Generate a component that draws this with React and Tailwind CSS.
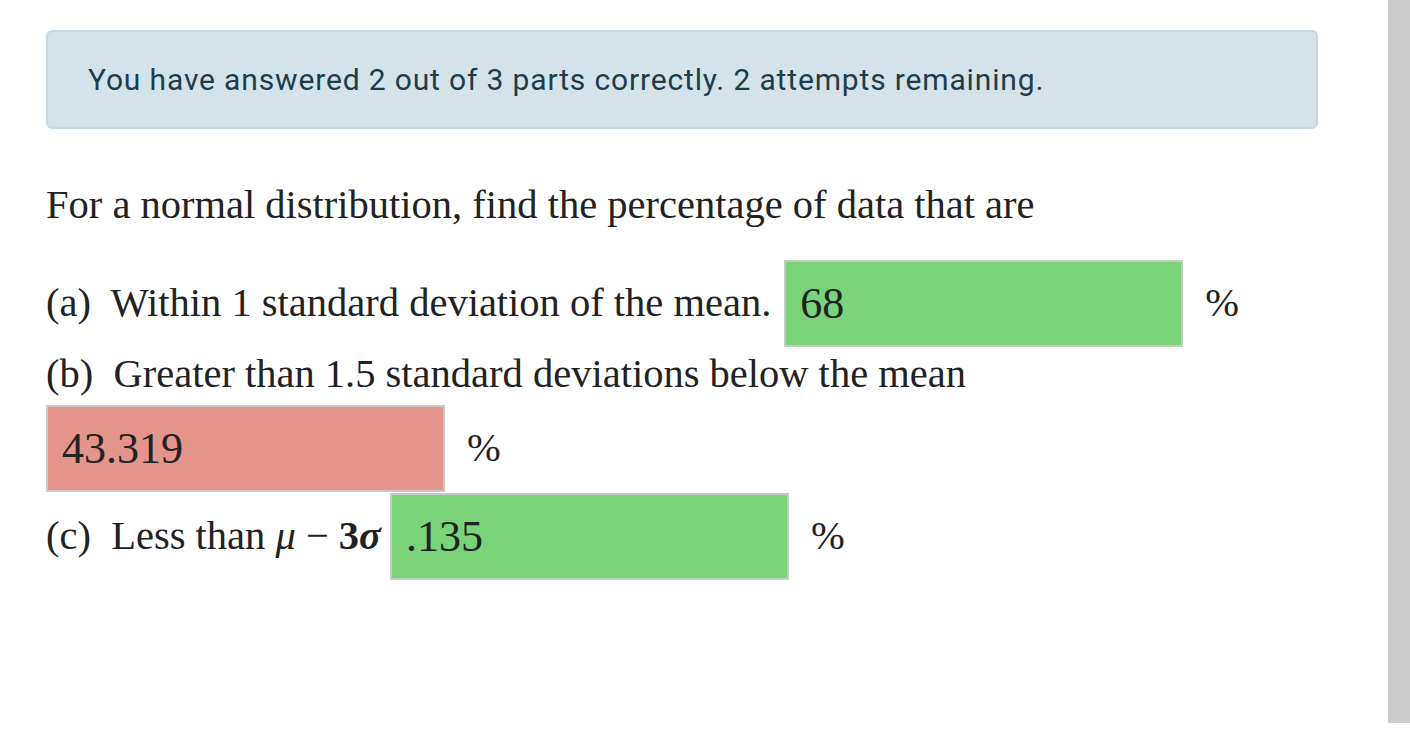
import React from "react";

const serif = { fontFamily: '"Liberation Serif", "Times New Roman", serif' };

const AnswerBox = ({ value, status }) => {
  const bg = status === "correct" ? "bg-[#79d479]" : "bg-[#e5948b]";
  return (
    <div
      className={`${bg} w-[399px] h-[87px] border-2 border-[#c9c9c9] flex items-center pl-[14px] text-[44px] text-[#222]`}
    >
      {value}
    </div>
  );
};

const Percent = ({ className }) => (
  <span className={`text-[40.5px] text-[#222] ${className}`}>%</span>
);

const App = () => {
  return (
    <div className="flex w-[1410px] h-[734px] bg-white overflow-hidden">
      <main className="flex-1 pl-[46px] pt-[30px]" style={serif}>
        <div className="w-[1272px] h-[99px] bg-[#d4e3e9] border-2 border-[#c6d9e0] rounded-[6px] flex items-center pl-[40px]">
          <p
            className="text-[30px] tracking-[0.85px] text-[#1e3d4b]"
            style={{ fontFamily: 'Roboto, "Liberation Sans", sans-serif' }}
          >
            You have answered 2 out of 3 parts correctly. 2 attempts remaining.
          </p>
        </div>

        <p className="mt-[49px] text-[40.5px] leading-[54px] text-[#222]">
          For a normal distribution, find the percentage of data that are
        </p>

        <div className="mt-[28px] flex items-center text-[40.5px] text-[#222]">
          <span className="whitespace-pre">(a)  Within 1 standard deviation of the mean.</span>
          <div className="ml-[13px]">
            <AnswerBox value="68" status="correct" />
          </div>
          <Percent className="ml-[22px]" />
        </div>

        <p className="text-[40.5px] leading-[54px] text-[#222] whitespace-pre">
          (b)  Greater than 1.5 standard deviations below the mean
        </p>

        <div className="mt-[4px] flex items-center">
          <AnswerBox value="43.319" status="wrong" />
          <Percent className="ml-[22px]" />
        </div>

        <div className="mt-px flex items-center text-[40.5px] text-[#222]">
          <span className="whitespace-pre">
            (c)  Less than <i>μ</i> − <b>3</b>
            <b>
              <i>σ</i>
            </b>
          </span>
          <div className="ml-[9px]">
            <AnswerBox value=".135" status="correct" />
          </div>
          <Percent className="ml-[22px]" />
        </div>
      </main>
      <div className="w-[22px] h-[723px] bg-[#cbcbcb]" />
    </div>
  );
};

export default App;
